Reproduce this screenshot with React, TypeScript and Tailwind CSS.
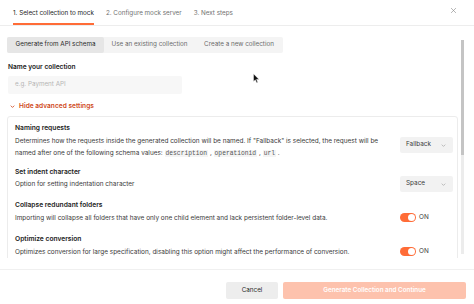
import React from "react";

const Chevron = ({ className = "" }: { className?: string }) => (
  <svg viewBox="0 0 10 10" className={className} fill="none" stroke="currentColor" strokeWidth="1.2">
    <path d="M2.5 3.8 5 6.3 7.5 3.8" />
  </svg>
);

const Select = ({ value }: { value: string }) => (
  <div className="flex h-[16px] w-[53px] items-center justify-between rounded-[2px] bg-[#f2f2f2] pl-[6px] pr-[6px] text-[6.4px] text-[#3a3a3a]">
    <span>{value}</span>
    <Chevron className="h-[7px] w-[7px] text-[#b0b0b0]" />
  </div>
);

const Toggle = () => (
  <div className="flex items-center gap-[3px]">
    <div className="flex h-[9px] w-[16px] items-center justify-end rounded-full bg-[#ff6c37] pr-[1px]">
      <div className="h-[7px] w-[7px] rounded-full bg-white" />
    </div>
    <span className="text-[6.4px] text-[#3a3a3a]">ON</span>
  </div>
);

const Code = ({ children }: { children: string }) => (
  <span className="bg-[#f4f4f4] px-[1px] font-['Liberation_Mono',monospace] text-[6.3px] leading-none text-[#555]">
    {children}
  </span>
);

interface Setting {
  title: string;
  desc: React.ReactNode;
  control: React.ReactNode;
  mt: string;
  descMt: string;
  ctrlMt: string;
}

const settings: Setting[] = [
  {
    title: "Naming requests",
    desc: (
      <>
        Determines how the requests inside the generated collection will be named. If "Fallback" is selected, the request will be
        named after one of the following schema values: <Code>description</Code> , <Code>operationid</Code> , <Code>url</Code> .
      </>
    ),
    control: <Select value="Fallback" />,
    mt: "mt-[7px]",
    descMt: "mt-[3px]",
    ctrlMt: "mt-[13px]",
  },
  {
    title: "Set indent character",
    desc: "Option for setting indentation character",
    control: <Select value="Space" />,
    mt: "mt-[9px]",
    descMt: "mt-[2px]",
    ctrlMt: "mt-[8px]",
  },
  {
    title: "Collapse redundant folders",
    desc: "Importing will collapse all folders that have only one child element and lack persistent folder-level data.",
    control: <Toggle />,
    mt: "mt-[9px]",
    descMt: "mt-[3px]",
    ctrlMt: "mt-[12px]",
  },
  {
    title: "Optimize conversion",
    desc: "Optimizes conversion for large specification, disabling this option might affect the performance of conversion.",
    control: <Toggle />,
    mt: "mt-[11px]",
    descMt: "mt-[3px]",
    ctrlMt: "mt-[12px]",
  },
];

export default function App() {
  return (
    <div className="relative flex h-[304px] w-[474px] flex-col overflow-hidden bg-white font-['Inter',sans-serif] text-[#212121]">
      {/* Step tabs */}
      <div className="relative flex h-[26px] shrink-0 gap-[12px] border-b border-[#ededed] px-[13px]">
        <div className="relative flex items-center pt-[3px] text-[6.3px] text-[#212121]">
          1. Select collection to mock
          <div className="absolute bottom-0 left-0 right-0 h-[2px] bg-[#ff6c37]" />
        </div>
        <div className="flex items-center pt-[3px] text-[6.3px] text-[#707070]">2. Configure mock server</div>
        <div className="flex items-center pt-[3px] text-[6.3px] text-[#707070]">3. Next steps</div>
        <div className="ml-auto flex items-start pr-[4px] pt-[7px] text-[#8a8a8a]">
          <svg viewBox="0 0 10 10" className="h-[7px] w-[7px]" stroke="currentColor" strokeWidth="0.9">
            <path d="M1.5 1.5 8.5 8.5M8.5 1.5 1.5 8.5" />
          </svg>
        </div>
      </div>

      {/* Body */}
      <div className="flex h-[232px] shrink-0 overflow-hidden">
        <div className="w-[458px] shrink-0 pl-[7px]">
          <div className="mt-[11px] flex h-[16px] w-[276px] rounded-[2px] bg-[#f4f4f4] text-[6.3px]">
            <div className="flex w-[97px] items-center justify-center rounded-[2px] bg-[#e6e6e6] text-[#2a2a2a]">
              Generate from API schema
            </div>
            <div className="flex w-[91px] items-center justify-center text-[#6b6b6b]">Use an existing collection</div>
            <div className="flex w-[88px] items-center justify-center text-[#6b6b6b]">Create a new collection</div>
          </div>

          <div className="mt-[10px] pl-[1px] text-[6.6px] font-semibold leading-[8px]">Name your collection</div>
          <div className="ml-[1px] mt-[5px] flex h-[18px] w-[174px] items-center rounded-[2px] bg-[#f7f7f7] pl-[7px] text-[6.3px] text-[#b5b5b5]">
            e.g. Payment API
          </div>

          <div className="mt-[8px] flex items-center gap-[3px] pl-[2px] text-[6.6px] font-semibold leading-[8px] text-[#cf4a22]">
            <Chevron className="h-[7px] w-[7px]" />
            Hide advanced settings
          </div>

          <div className="mt-[6px] rounded-t-[3px] border border-[#ececec] px-[7px] pb-[20px]">
            {settings.map((s) => (
              <div key={s.title} className={`flex items-start ${s.mt}`}>
                <div className="w-[380px] shrink-0">
                  <div className="text-[6.7px] font-semibold leading-[8px] text-[#212121]">{s.title}</div>
                  <div className={`${s.descMt} w-[364px] text-[6.45px] leading-[12px] text-[#3a3a3a]`}>{s.desc}</div>
                </div>
                <div className={`ml-[5px] ${s.ctrlMt}`}>{s.control}</div>
              </div>
            ))}
          </div>
        </div>

        {/* Scrollbar */}
        <div className="ml-[3px] mt-[14px] flex h-[214px] w-[3px] flex-col bg-[#ececec]">
          <div className="h-[115px] w-[3px] bg-[#c4c4c4]" />
        </div>
      </div>

      <div className="h-[11px] shrink-0" />

      {/* Footer */}
      <div className="flex flex-1 items-start justify-end gap-[5px] border-t border-[#f0f0f0] pr-[8px] pt-[12px]">
        <div className="flex h-[17px] w-[52px] items-center justify-center rounded-[2px] bg-[#ededed] text-[6.3px] text-[#2a2a2a]">
          Cancel
        </div>
        <div className="flex h-[17px] w-[183px] items-center justify-center rounded-[2px] bg-[#fdc2ad] text-[6.3px] font-semibold text-white">
          Generate Collection and Continue
        </div>
      </div>

      {/* Mouse cursor */}
      <svg viewBox="0 0 8 12" className="absolute left-[253px] top-[73px] h-[11px] w-[7px]">
        <path d="M0.5 0.5V9.5L2.7 7.6 4.2 11 5.6 10.4 4.1 7.1H7Z" fill="#111" stroke="#fff" strokeWidth="0.6" />
      </svg>
    </div>
  );
}
